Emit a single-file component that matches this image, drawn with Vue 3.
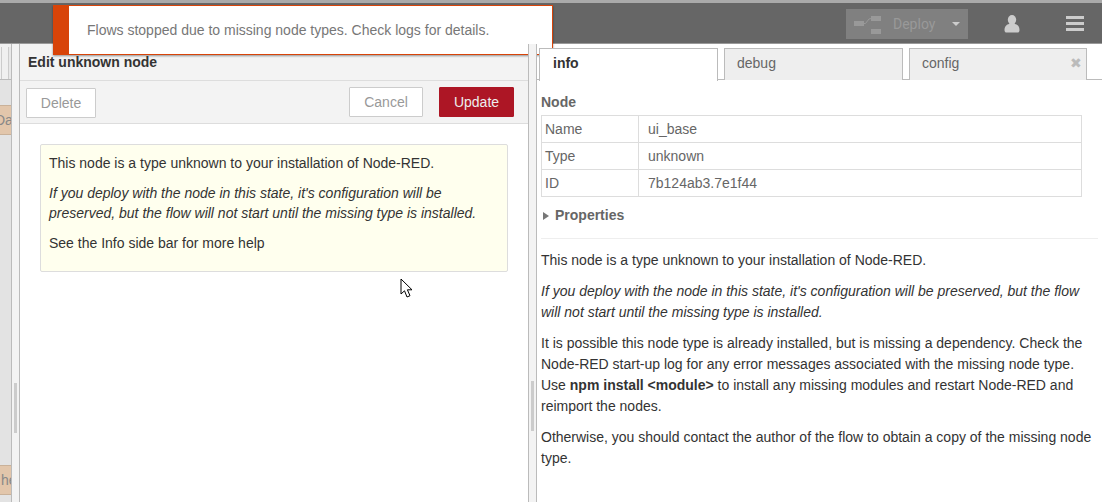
<script setup>
const tabs = [
  { label: 'info', active: true },
  { label: 'debug' },
  { label: 'config', close: true },
]

const rows = [
  ['Name', 'ui_base'],
  ['Type', 'unknown'],
  ['ID', '7b124ab3.7e1f44'],
]
</script>

<template>
  <div class="page">
    <header class="header">
      <div class="deploy">
        <svg class="deploy-icon" width="27" height="18" viewBox="0 0 27 18">
          <rect x="0" y="5" width="10" height="5" />
          <path d="M10 7.5 L11.5 7.5 L15 3 L17 2.5" stroke="#999" fill="none" />
          <rect x="17" y="0" width="10" height="5" />
          <rect x="17" y="13" width="10" height="5" />
        </svg>
        <span class="deploy-label">Deploy</span>
        <span class="caret"></span>
      </div>
      <div class="user">
        <svg width="16" height="18" viewBox="0 0 16 18">
          <ellipse cx="8" cy="4.8" rx="4.2" ry="4.8" fill="#ccc" />
          <path d="M0.5 15 C0.5 11 3 9.5 5 9 L11 9 C13 9.5 15.5 11 15.5 15 C15.5 17 14.5 17.5 13.5 17.5 L2.5 17.5 C1.5 17.5 0.5 17 0.5 15 Z" fill="#ccc" />
        </svg>
      </div>
      <div class="menu">
        <span></span><span></span><span></span>
      </div>
    </header>

    <div class="notification">
      <p>Flows stopped due to missing node types. Check logs for details.</p>
    </div>

    <div class="main">
      <div class="canvas">
        <div class="canvas-tabs"><span></span><span></span></div>
        <div class="node first"><span>Da</span></div>
        <div class="node second">he</div>
      </div>
      <div class="sep left-sep"><i></i></div>

      <section class="tray">
        <div class="tray-title">Edit unknown node</div>
        <div class="tray-toolbar">
          <button class="btn">Delete</button>
          <div class="toolbar-right">
            <button class="btn cancel">Cancel</button>
            <button class="btn primary">Update</button>
          </div>
        </div>
        <div class="tray-body">
          <div class="tip">
            <p>This node is a type unknown to your installation of Node-RED.</p>
            <p><em>If you deploy with the node in this state, it's configuration will be preserved, but the flow will not start until the missing type is installed.</em></p>
            <p>See the Info side bar for more help</p>
          </div>
          <svg class="cursor" width="14" height="21" viewBox="0 0 14 21">
            <path d="M1 1 V16 L4.5 12.8 L7 19 L10 17.7 L7.4 11.8 L12 11.8 Z" fill="#fff" stroke="#000" stroke-width="1" />
          </svg>
        </div>
      </section>

      <div class="sep right-sep"><i></i></div>

      <aside class="sidebar">
        <div class="tabs">
          <div v-for="tab in tabs" :key="tab.label" class="tab" :class="{ active: tab.active }">
            {{ tab.label }}
            <span v-if="tab.close" class="close">✖</span>
          </div>
        </div>
        <div class="info">
          <h4>Node</h4>
          <table>
            <tr v-for="row in rows" :key="row[0]">
              <td class="key">{{ row[0] }}</td>
              <td>{{ row[1] }}</td>
            </tr>
          </table>
          <div class="props"><span class="arrow"></span>Properties</div>
          <hr />
          <div class="help">
            <p>This node is a type unknown to your installation of Node-RED.</p>
            <p><em>If you deploy with the node in this state, it's configuration will be preserved, but the flow will not start until the missing type is installed.</em></p>
            <p>It is possible this node type is already installed, but is missing a dependency. Check the Node-RED start-up log for any error messages associated with the missing node type. Use <b>npm install &lt;module&gt;</b> to install any missing modules and restart Node-RED and reimport the nodes.</p>
            <p>Otherwise, you should contact the author of the flow to obtain a copy of the missing node type.</p>
          </div>
        </div>
      </aside>
    </div>
  </div>
</template>

<style>
body {
  margin: 0;
  background: #fff;
}
</style>

<style scoped>
.page {
  position: relative;
  width: 1102px;
  height: 502px;
  overflow: hidden;
  font-family: "Liberation Sans", Arial, sans-serif;
  font-size: 14px;
  line-height: 21px;
  color: #333;
  background: #fff;
}

.header {
  box-sizing: border-box;
  height: 44px;
  display: flex;
  align-items: center;
  justify-content: flex-end;
  background: #666;
  border-top: 3px solid #aaa;
  border-bottom: 1px solid #999;
}

.deploy {
  width: 122px;
  height: 30px;
  margin: 2px 36px 0 0;
  display: flex;
  align-items: center;
  background: #808080;
  color: #999;
  font-family: Roboto, sans-serif;
  font-size: 14px;
}

.deploy-icon {
  margin: 2px 0 0 8px;
  fill: #999;
}

.deploy-label {
  margin-left: 12px;
}

.caret {
  margin-left: 17px;
  border-left: 4px solid transparent;
  border-right: 4px solid transparent;
  border-top: 4px solid #ccc;
}

.user {
  width: 16px;
  height: 18px;
  margin-top: 1px;
}

.menu {
  width: 18px;
  margin-left: 46px;
  margin-right: 18px;
  display: flex;
  flex-direction: column;
  gap: 3px;
}

.menu span {
  display: block;
  width: 18px;
  height: 3px;
  background: #ccc;
}

.notification {
  position: absolute;
  left: 53px;
  top: 5px;
  box-sizing: border-box;
  width: 500px;
  height: 50px;
  background: #fff;
  border: 1px solid #d84409;
  border-left-width: 16px;
  box-shadow: 0 1px 2px rgba(0, 0, 0, 0.4);
  color: #777;
  display: flex;
  align-items: center;
}

.notification p {
  margin: 0 0 0 18px;
}

.main {
  display: flex;
  height: 458px;
}

.canvas {
  width: 12px;
  background: #e3e3e3;
  border-right: 1px solid #bbb;
  box-sizing: border-box;
  overflow: hidden;
  display: flex;
  flex-direction: column;
  flex-shrink: 0;
}

.canvas-tabs {
  box-sizing: border-box;
  height: 36px;
  padding-top: 3px;
  display: flex;
  gap: 6px;
  background: #f0f0f0;
  border-bottom: 1px solid #bbb;
  flex-shrink: 0;
}

.canvas-tabs span {
  width: 2px;
  border-right: 1px solid #ccc;
}

.canvas-tabs span + span {
  width: 3px;
  border-right: none;
  border-left: 1px solid #ccc;
  background: #e8e8e8;
}

.node {
  box-sizing: border-box;
  height: 30px;
  width: 12px;
  background: #e2c6ab;
  border-top: 1px solid #c9b199;
  border-bottom: 1px solid #c9b199;
  color: #888;
  white-space: nowrap;
  font-size: 14px;
  line-height: 28px;
  flex-shrink: 0;
  overflow: hidden;
}

.node.first {
  margin-top: 25px;
}

.node.first span {
  display: block;
  margin-left: -5px;
}

.node.second {
  margin-top: 330px;
  padding-left: 1px;
}

.sep {
  width: 8px;
  flex-shrink: 0;
  box-sizing: border-box;
  background: #f3f3f3;
  position: relative;
}

.sep i {
  position: absolute;
  left: 2px;
  top: 339px;
  width: 3px;
  height: 50px;
  background: #ccc;
}

.left-sep {
  border-right: 1px solid #bbb;
}

.right-sep {
  border-left: 1px solid #bbb;
  border-right: 1px solid #bbb;
  width: 9px;
}

.right-sep i {
  top: 337px;
}

.tray {
  width: 508px;
  flex-shrink: 0;
  display: flex;
  flex-direction: column;
}

.tray-title {
  box-sizing: border-box;
  height: 37px;
  padding: 8px 0 0 8px;
  background: #f3f3f3;
  border-bottom: 1px solid #ddd;
  font-weight: bold;
}

.tray-toolbar {
  box-sizing: border-box;
  height: 43px;
  padding: 7px 14px 0 6px;
  display: flex;
  justify-content: space-between;
  align-items: flex-start;
  background: #f3f3f3;
  border-bottom: 1px solid #ddd;
}

.toolbar-right {
  display: flex;
  gap: 16px;
  margin-top: -1px;
}

.btn {
  box-sizing: border-box;
  height: 30px;
  width: 70px;
  padding: 0;
  border: 1px solid #ccc;
  border-radius: 1px;
  background: #fff;
  color: #999;
  font: inherit;
}

.cancel {
  width: 74px;
}

.primary {
  width: 75px;
  background: #ad1625;
  border-color: #ad1625;
  color: #eee;
}

.tray-body {
  position: relative;
  flex: 1;
  padding: 20px;
}

.tip {
  box-sizing: border-box;
  height: 128px;
  padding: 8px;
  line-height: 20px;
  background: #ffffee;
  border: 1px solid #ddd;
  border-radius: 2px;
}

.tip p {
  margin: 0 0 10px;
}

.cursor {
  position: absolute;
  left: 380px;
  top: 154px;
}

.sidebar {
  flex: 1;
  min-width: 0;
}

.tabs {
  height: 36px;
  box-sizing: border-box;
  padding: 4px 0 0 2px;
  display: flex;
  gap: 6px;
  border-bottom: 1px solid #bbb;
}

.tab {
  position: relative;
  box-sizing: border-box;
  width: 179px;
  height: 32px;
  padding: 4px 0 0 12px;
  background: #eee;
  border: 1px solid #bbb;
  border-bottom: none;
  color: #666;
}

.tab:last-child {
  width: 178px;
}

.tab.active {
  padding-left: 13px;
  background: #fff;
  color: #333;
  font-weight: bold;
  height: 33px;
}

.close {
  position: absolute;
  right: 4px;
  top: 4px;
  color: #bbb;
  font-size: 14px;
}

.info {
  padding: 0 4px;
}

h4 {
  margin: 12px 0 2px;
  font-size: 14px;
  color: #666;
}

table {
  width: 541px;
  border-collapse: collapse;
}

td {
  height: 27px;
  padding: 0 0 0 9px;
  border: 1px solid #ddd;
  color: #666;
  box-sizing: border-box;
}

td.key {
  width: 97px;
  padding-left: 3px;
}

.props {
  margin-top: 8px;
  font-weight: bold;
  color: #666;
  display: flex;
  align-items: center;
}

.arrow {
  margin: 0 6px 0 2px;
  border-top: 4px solid transparent;
  border-bottom: 4px solid transparent;
  border-left: 6px solid #777;
}

hr {
  border: none;
  border-top: 1px solid #eee;
  margin: 12px 0 11px;
}

.help p {
  margin: 0 0 10px;
}
</style>
